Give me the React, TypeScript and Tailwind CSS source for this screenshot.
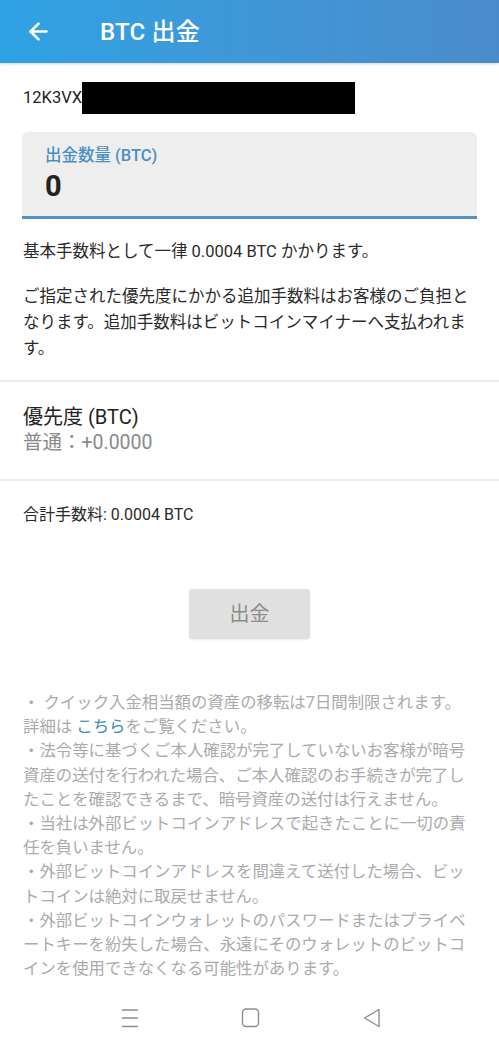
import { ArrowLeft } from "lucide-react";

const notes: React.ReactNode[] = [
  <>
    ・ クイック入金相当額の資産の移転は7日間制限されます。詳細は{" "}
    <span className="text-[#3b8db3]">こちら</span>をご覧ください。
  </>,
  "・法令等に基づくご本人確認が完了していないお客様が暗号資産の送付を行われた場合、ご本人確認のお手続きが完了したことを確認できるまで、暗号資産の送付は行えません。",
  "・当社は外部ビットコインアドレスで起きたことに一切の責任を負いません。",
  "・外部ビットコインアドレスを間違えて送付した場合、ビットコインは絶対に取戻せません。",
  "・外部ビットコインウォレットのパスワードまたはプライベートキーを紛失した場合、永遠にそのウォレットのビットコインを使用できなくなる可能性があります。",
  "・暗号資産の送付には、ネットワークの混雑状況により時間がかかる場合があります。",
];

function NavBar() {
  return (
    <div className="h-[64px] shrink-0 bg-white flex items-center justify-center gap-[102px] pl-[2px] pt-[4px]">
      <svg width="18" height="20" viewBox="0 0 18 20" fill="none" stroke="#8e8e8e" strokeWidth="1.4">
        <path d="M1 2h16M1 10h16M1 18.5h16" />
      </svg>
      <svg width="20" height="20" viewBox="0 0 20 20" fill="none" stroke="#8e8e8e" strokeWidth="1.4">
        <rect x="1.5" y="1" width="16" height="17.5" rx="3.5" />
      </svg>
      <svg width="18" height="20" viewBox="0 0 18 20" fill="none" stroke="#8e8e8e" strokeWidth="1.4">
        <path d="M16 1.5v17L1.5 10z" strokeLinejoin="round" />
      </svg>
    </div>
  );
}

export default function App() {
  return (
    <div className="w-full h-[1048px] flex flex-col overflow-hidden bg-white font-['Roboto','Noto_Sans_CJK_JP',sans-serif]">
      <header className="relative z-10 h-[63px] shrink-0 flex items-center bg-gradient-to-r from-[#2ea2e3] to-[#4a8ccb] text-white shadow-[0_1px_3px_rgba(0,0,0,0.18)]">
        <ArrowLeft className="ml-[25px] size-[27px]" strokeWidth={2.4} />
        <h1 className="ml-[48px] text-[24px] font-medium tracking-[0.2px]">BTC 出金</h1>
      </header>

      <main className="flex-1 overflow-hidden">
        <div className="mt-[19px] flex items-center px-[23px] h-[32px]">
          <span className="text-[16.5px] text-[#222]">12K3VX</span>
          <div className="w-[273px] h-[32px] bg-black" />
        </div>

        <div className="mx-[22px] mt-[18px] h-[87px] rounded-t-[6px] bg-[#eeeeee] border-b-[3px] border-[#4f93c4] px-[23px] pt-[13px]">
          <div className="text-[16.5px] leading-[22px] font-medium text-[#4a90c3]">出金数量 (BTC)</div>
          <div className="mt-[3px] text-[29px] leading-[32px] font-bold text-[#222]">0</div>
        </div>

        <div className="px-[23px] text-[16.5px] leading-[26px] text-[#2a2a2a]">
          <p className="mt-[20px]">基本手数料として一律 0.0004 BTC かかります。</p>
          <p className="mt-[19px]">
            ご指定された優先度にかかる追加手数料はお客様のご負担となります。追加手数料はビットコインマイナーへ支払われます。
          </p>
        </div>

        <div className="mt-[18px] h-[2px] bg-[#ececec]" />

        <div className="px-[23px] pt-[22px] pb-[23px]">
          <div className="text-[20px] leading-[26px] text-[#222]">優先度 (BTC)</div>
          <div className="text-[19.5px] leading-[26px] text-[#8a8a8a]">普通：+0.0000</div>
        </div>

        <div className="h-[2px] bg-[#ececec]" />

        <div className="px-[23px] pt-[24px] text-[16px] leading-[20px] text-[#2a2a2a]">
          合計手数料: 0.0004 BTC
        </div>

        <div className="mt-[64px] flex justify-center">
          <button className="w-[121px] h-[50px] rounded-[3px] bg-[#e0e0e0] text-[20px] text-[#8c8c8c] shadow-[0_1px_2px_rgba(0,0,0,0.08)]">
            出金
          </button>
        </div>

        <div className="mt-[52px] px-[23px] text-[16.4px] leading-[24.2px] text-[#ababab]">
          {notes.map((n, i) => (
            <p key={i}>{n}</p>
          ))}
        </div>
      </main>

      <NavBar />
    </div>
  );
}
